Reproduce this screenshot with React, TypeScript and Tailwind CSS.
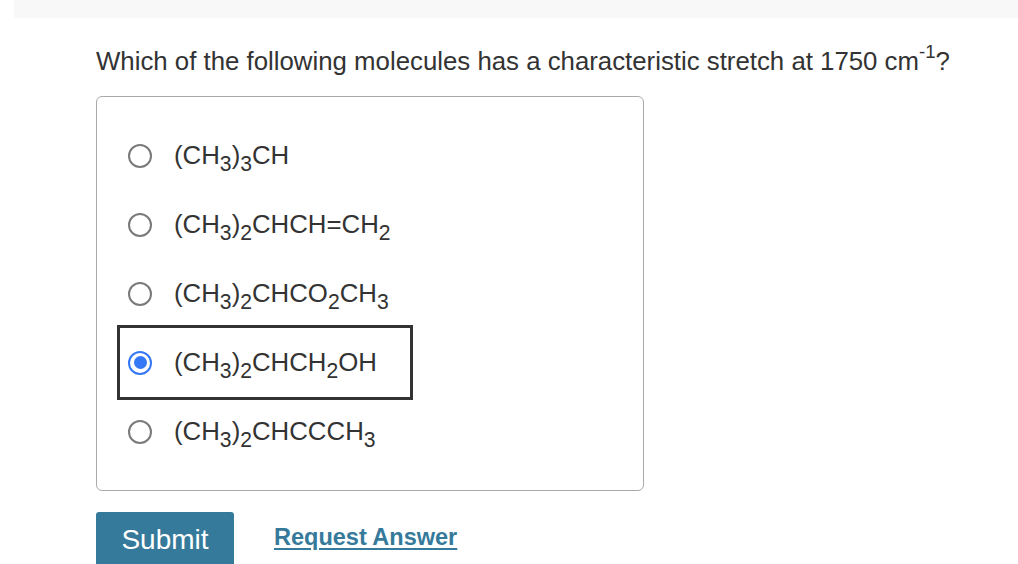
import { useState } from 'react'

type Part = string | { sub: string }

const options: { id: string; parts: Part[] }[] = [
  { id: 'a', parts: ['(CH', { sub: '3' }, ')', { sub: '3' }, 'CH'] },
  { id: 'b', parts: ['(CH', { sub: '3' }, ')', { sub: '2' }, 'CHCH=CH', { sub: '2' }] },
  { id: 'c', parts: ['(CH', { sub: '3' }, ')', { sub: '2' }, 'CHCO', { sub: '2' }, 'CH', { sub: '3' }] },
  { id: 'd', parts: ['(CH', { sub: '3' }, ')', { sub: '2' }, 'CHCH', { sub: '2' }, 'OH'] },
  { id: 'e', parts: ['(CH', { sub: '3' }, ')', { sub: '2' }, 'CHCCCH', { sub: '3' }] },
]

function Formula({ parts }: { parts: Part[] }) {
  return (
    <span>
      {parts.map((p, i) =>
        typeof p === 'string' ? (
          <span key={i}>{p}</span>
        ) : (
          <sub key={i} className="relative bottom-[-0.3em] align-baseline text-[0.82em]">
            {p.sub}
          </sub>
        ),
      )}
    </span>
  )
}

function Radio({ checked }: { checked: boolean }) {
  return checked ? (
    <span className="flex h-[24px] w-[24px] shrink-0 items-center justify-center rounded-full border-[2.5px] border-[#3478f6] bg-white">
      <span className="h-[13px] w-[13px] rounded-full bg-[#3478f6]" />
    </span>
  ) : (
    <span className="h-[24px] w-[24px] shrink-0 rounded-full border-2 border-[#7a7a7a] bg-white" />
  )
}

export default function App() {
  const [selected, setSelected] = useState('d')

  return (
    <div className="min-h-[564px] bg-white font-['Liberation_Sans',Arial,sans-serif] text-[#333]">
      <div className="ml-[14px] h-[18px] rounded-bl-[3px] bg-[#f8f8f8]" />
      <div className="pl-[96px]">
        <div className="pt-[28px] text-[25.8px] leading-[30px] text-[#333]">
          Which of the following molecules has a characteristic stretch at 1750 cm
          <sup className="relative top-[-0.62em] align-baseline text-[0.72em]">-1</sup>?
        </div>
        <div className="mt-[20px] h-[395px] w-[548px] rounded-[6px] border border-[#aaa] pl-[23px] pt-[24px]">
          <div className="flex flex-col">
            {options.map((o) => (
              <button
                key={o.id}
                onClick={() => setSelected(o.id)}
                className={`flex h-[69px] w-fit items-center gap-[22px] pl-[8px] pr-[33px] text-left text-[25.8px] text-[#333] ${
                  selected === o.id ? 'outline-[3px] outline-[#333] outline-solid outline-offset-[0.5px]' : ''
                }`}
              >
                <Radio checked={selected === o.id} />
                <Formula parts={o.parts} />
              </button>
            ))}
          </div>
        </div>
        <div className="mt-[21px] flex items-center gap-[40px]">
          <button className="h-[56px] w-[138px] rounded-t-[3px] bg-[#367a9b] text-[28px] text-white">Submit</button>
          <a href="#" className="pb-[4px] text-[23.5px] font-bold text-[#367a9b] underline underline-offset-[3px]">
            Request Answer
          </a>
        </div>
      </div>
    </div>
  )
}
